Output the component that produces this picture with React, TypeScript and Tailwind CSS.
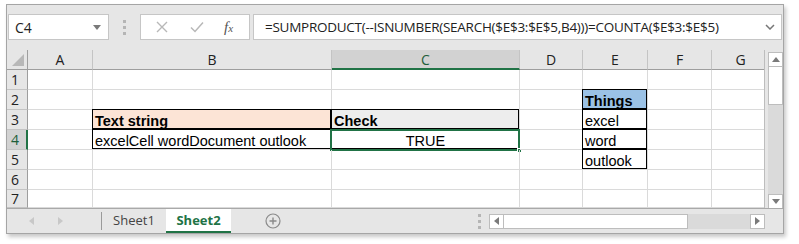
import React from 'react';

const ui = "font-['Open_Sans',_'Noto_Sans',_sans-serif]";
const cellFont = "font-['Liberation_Sans',_Arial,_sans-serif]";

const cols = ['A', 'B', 'C', 'D', 'E', 'F', 'G'];
const rows = [1, 2, 3, 4, 5, 6, 7];

type CellSpec = { text?: string; bold?: boolean; bg?: string; boxed?: boolean; center?: boolean; selected?: boolean };

const data: Record<string, CellSpec> = {
  B3: { text: 'Text string', bold: true, bg: 'bg-[#fce4d6]', boxed: true },
  C3: { text: 'Check', bold: true, bg: 'bg-[#ededed]', boxed: true },
  B4: { text: 'excelCell wordDocument outlook', boxed: true },
  C4: { text: 'TRUE', boxed: true, center: true, selected: true },
  E2: { text: 'Things', bold: true, bg: 'bg-[#9bc2e6]', boxed: true },
  E3: { text: 'excel', boxed: true },
  E4: { text: 'word', boxed: true },
  E5: { text: 'outlook', boxed: true },
};

function VDots() {
  return (
    <div className="flex flex-col gap-[3px]">
      <span className="h-[3px] w-[3px] bg-[#b5b5b5]" />
      <span className="h-[3px] w-[3px] bg-[#b5b5b5]" />
      <span className="h-[3px] w-[3px] bg-[#b5b5b5]" />
    </div>
  );
}

function Toolbar() {
  return (
    <div className="flex h-[45px] items-start pt-[9px] pl-px">
      <div className={`flex h-[26px] w-[101px] items-center justify-between border border-[#c6c6c6] bg-white pl-[6px] pr-[7px] ${ui} text-[14px] text-[#222]`}>
        <span>C4</span>
        <svg width="8" height="5" viewBox="0 0 8 5"><path d="M0 0h8L4 5z" fill="#7a7a7a" /></svg>
      </div>
      <div className="flex h-[26px] w-[31px] items-center justify-center">
        <VDots />
      </div>
      <div className="flex h-[26px] w-[110px] items-center border border-[#c6c6c6] bg-white">
        <svg className="ml-[15px]" width="12" height="12" viewBox="0 0 12 12">
          <path d="M1 1l10 10M11 1L1 11" stroke="#b8b8b8" strokeWidth="1.4" />
        </svg>
        <svg className="ml-[22px]" width="14" height="12" viewBox="0 0 14 12">
          <path d="M1 6.5l4 4L13 1.5" stroke="#b8b8b8" strokeWidth="1.5" fill="none" />
        </svg>
        <span className="ml-[20px] font-['Liberation_Serif',_serif] text-[15px] italic text-[#555]">
          f<span className="text-[11px]">x</span>
        </span>
      </div>
      <div className={`ml-[3px] flex h-[26px] w-[529px] items-center justify-between border border-[#c6c6c6] bg-white pl-[11px] pr-[6px] ${ui} text-[13.5px] text-[#222]`}>
        <span className="tracking-[-0.27px]">=SUMPRODUCT(--ISNUMBER(SEARCH($E$3:$E$5,B4)))=COUNTA($E$3:$E$5)</span>
        <svg width="10" height="6" viewBox="0 0 10 6"><path d="M1 1l4 4 4-4" stroke="#777" strokeWidth="1.5" fill="none" /></svg>
      </div>
    </div>
  );
}

function Grid() {
  return (
    <div className="grid grid-cols-[21px_65px_239px_188px_63px_65px_64px_53px] grid-rows-[20px_repeat(6,20px)_18px] overflow-hidden border-r border-[#bdbdbd] bg-white">
      <div className="relative border-r border-b border-[#9e9e9e] bg-[#e6e6e6]">
        <svg className="absolute right-[3px] bottom-[3px]" width="12" height="12" viewBox="0 0 12 12"><path d="M12 0v12H0z" fill="#b8b8b8" /></svg>
      </div>
      {cols.map((c) => (
        <div
          key={c}
          className={`flex items-center justify-center border-r border-[#c4c4c4] ${ui} text-[14px] ${
            c === 'C' ? 'border-b-2 border-b-[#217346] bg-[#d2d2d2] text-[#1e5e3a]' : 'border-b border-b-[#9e9e9e] bg-[#e6e6e6] text-[#222]'
          } ${c === 'G' ? 'border-r-0 pl-[4px]' : ''}`}
        >
          {c}
        </div>
      ))}
      {rows.map((r) => (
        <React.Fragment key={r}>
          <div
            className={`flex items-center border-b border-[#c4c4c4] pl-[4px] ${ui} text-[14px] ${
              r === 4 ? 'border-r-2 border-r-[#217346] bg-[#d2d2d2] text-[#1e5e3a]' : 'border-r border-r-[#9e9e9e] bg-[#e6e6e6] text-[#222]'
            }`}
          >
            {r}
          </div>
          {cols.map((c) => {
            const d = data[`${c}${r}`];
            return (
              <div
                key={c}
                className={`relative flex items-center border-r border-b border-[#dadada] pt-[3px] ${cellFont} text-[14.5px] leading-none text-black ${d?.bg ?? ''} ${
                  d?.center ? 'justify-center' : 'pl-[2px]'
                } ${d?.bold ? 'font-bold' : ''} ${c === 'G' ? 'border-r-0' : ''}`}
              >
                {d?.text}
                {d?.boxed && <span className="pointer-events-none absolute -left-px -top-px right-0 bottom-0 border border-black" />}
                {d?.selected && (
                  <>
                    <span className="pointer-events-none absolute -left-[2px] -top-px -right-px bottom-[-2px] border-2 border-[#217346]" />
                    <span className="absolute -right-[3px] -bottom-[4px] h-[5px] w-[5px] border border-white bg-[#217346]" />
                  </>
                )}
              </div>
            );
          })}
        </React.Fragment>
      ))}
    </div>
  );
}

function VScroll() {
  return (
    <div className="ml-[3px] mt-[2px] flex w-[15px] flex-col bg-[#dadada]">
      <div className="flex h-[15px] items-center justify-center border border-[#bdbdbd] bg-white">
        <svg width="8" height="5" viewBox="0 0 8 5"><path d="M0 5h8L4 0z" fill="#7a7a7a" /></svg>
      </div>
      <div className="h-[38px] border border-t-0 border-[#bdbdbd] bg-white" />
      <div className="flex-1" />
      <div className="flex h-[14px] items-center justify-center border border-b-0 border-[#bdbdbd] bg-white">
        <svg width="8" height="5" viewBox="0 0 8 5"><path d="M0 0h8L4 5z" fill="#7a7a7a" /></svg>
      </div>
    </div>
  );
}

function TabBar() {
  return (
    <div className={`flex h-[25px] items-stretch border-t border-[#a9a9a9] ${ui} text-[13px]`}>
      <div className="flex w-[94px] items-center">
        <svg className="ml-[22px]" width="5" height="8" viewBox="0 0 5 8"><path d="M5 0v8L0 4z" fill="#c8c8c8" /></svg>
        <svg className="ml-[24px]" width="5" height="8" viewBox="0 0 5 8"><path d="M0 0v8l5-4z" fill="#c8c8c8" /></svg>
      </div>
      <div className="my-[3px] w-px bg-[#9a9a9a]" />
      <div className="flex w-[64px] items-center justify-center text-[#444]">Sheet1</div>
      <div className="flex w-[65px] items-center justify-center border-b-2 border-[#217346] bg-white pt-[2px] font-bold text-[#217346]">Sheet2</div>
      <div className="flex w-[84px] items-center justify-center">
        <svg width="16" height="16" viewBox="0 0 16 16">
          <circle cx="8" cy="8" r="7" stroke="#8a8a8a" strokeWidth="1.2" fill="none" />
          <path d="M8 4.5v7M4.5 8h7" stroke="#8a8a8a" strokeWidth="1.4" />
        </svg>
      </div>
      <div className="flex-1" />
      <div className="flex w-[20px] items-center justify-center">
        <VDots />
      </div>
      <div className="mr-[18px] flex h-[15px] w-[276px] self-center bg-[#dadada]">
        <div className="flex w-[15px] items-center justify-center border border-[#bdbdbd] bg-white">
          <svg width="5" height="8" viewBox="0 0 5 8"><path d="M5 0v8L0 4z" fill="#7a7a7a" /></svg>
        </div>
        <div className="w-[184px] border border-l-0 border-[#bdbdbd] bg-white" />
        <div className="flex-1" />
        <div className="flex w-[15px] items-center justify-center border border-[#bdbdbd] bg-white">
          <svg width="5" height="8" viewBox="0 0 5 8"><path d="M0 0v8l5-4z" fill="#7a7a7a" /></svg>
        </div>
      </div>
    </div>
  );
}

export default function App() {
  return (
    <div className="h-[244px] w-[799px] bg-white pl-[6px] pt-[4px]">
      <div className="flex h-[230px] w-[778px] flex-col border border-[#a5a5a5] bg-[#e6e6e6] shadow-[2px_3px_4px_rgba(0,0,0,0.22)]">
        <Toolbar />
        <div className="flex h-[158px]">
          <Grid />
          <VScroll />
        </div>
        <TabBar />
      </div>
    </div>
  );
}
